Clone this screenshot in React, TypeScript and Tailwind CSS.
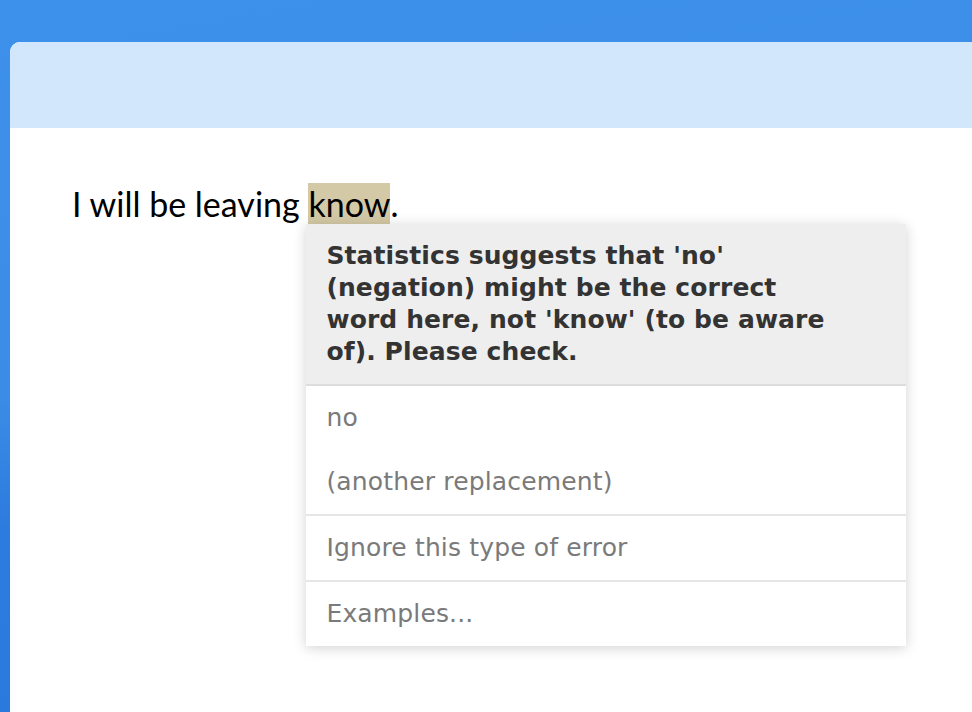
export default function App() {
  return (
    <div className="w-[972px] h-[712px] overflow-hidden bg-[linear-gradient(170deg,#3e91ea_0%,#3b8ce6_45%,#2c7bde_60%,#2a78dc_100%)] pt-[42px] pl-[10px] flex">
      <div className="flex-1 flex flex-col bg-white rounded-tl-[10px] overflow-hidden">
        <div className="h-[86px] bg-[#d2e7fc]" />
        <div className="flex-1 pl-[62px] pt-[56px]">
          <p className="text-[34px] leading-[40px] text-black" style={{ fontFamily: "Lato, 'Noto Sans', sans-serif" }}>
            I will be leaving{" "}
            <span className="relative bg-[#d3c9a6]">
              know
              <SuggestionMenu />
            </span>
            .
          </p>
        </div>
      </div>
    </div>
  );
}

function SuggestionMenu() {
  const replacements = ["no", "(another replacement)"];
  return (
    <div
      className="absolute top-full left-[-2px] w-[600px] bg-white shadow-[0_2px_12px_rgba(0,0,0,0.18)] text-[25px] leading-[32px] tracking-[0.15px]"
      style={{ fontFamily: "'DejaVu Sans', Verdana, sans-serif" }}
    >
      <div className="bg-[#eeeeee] pl-[20px] pr-[64px] py-[16px] font-bold text-[#333333] tracking-[0.1px] border-b-2 border-[#dddddd]">
        Statistics suggests that 'no' (negation) might be the correct word here, not 'know' (to be aware of). Please check.
      </div>
      <div className="border-b-2 border-[#e6e6e6]">
        {replacements.map((r) => (
          <div key={r} className="px-[20px] py-[16px] text-[#7a7a7a]">{r}</div>
        ))}
      </div>
      <div className="px-[20px] py-[16px] text-[#7a7a7a] border-b-2 border-[#e6e6e6]">Ignore this type of error</div>
      <div className="px-[20px] py-[16px] text-[#7a7a7a]">Examples...</div>
    </div>
  );
}
